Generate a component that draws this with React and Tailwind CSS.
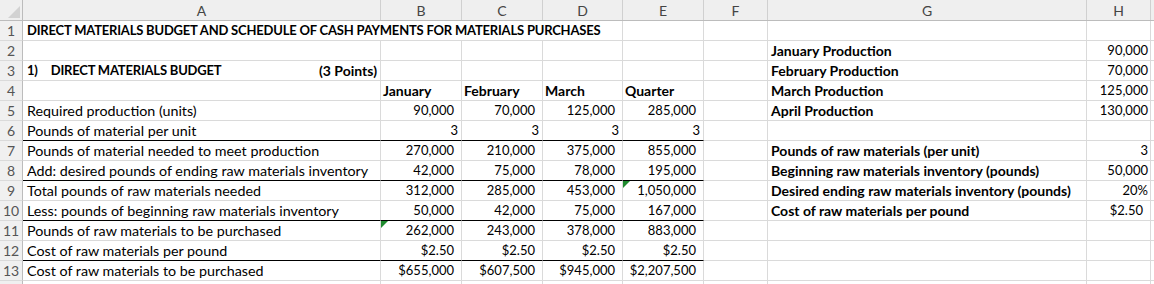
import React from "react";

const colWidths = ["w-[358px]", "w-[81px]", "w-[81px]", "w-[80px]", "w-[81px]", "w-[64px]", "w-[319px]", "w-[64px]"];
const letters = ["A", "B", "C", "D", "E", "F", "G", "H"];

const side = {
  2: ["January Production", "90,000"],
  3: ["February Production", "70,000"],
  4: ["March Production", "125,000"],
  5: ["April Production", "130,000"],
  7: ["Pounds of raw materials (per unit)", "3"],
  8: ["Beginning raw materials inventory (pounds)", "50,000"],
  9: ["Desired ending raw materials inventory (pounds)", "20%"],
  10: ["Cost of raw materials per pound", "$2.50", true],
};

const budget = {
  5: ["Required production (units)", ["90,000", "70,000", "125,000", "285,000"]],
  6: ["Pounds of material per unit", ["3", "3", "3", "3"], { general: true, line: true }],
  7: ["Pounds of material needed to meet production", ["270,000", "210,000", "375,000", "855,000"]],
  8: ["Add: desired pounds of ending raw materials inventory", ["42,000", "75,000", "78,000", "195,000"], { line: true }],
  9: ["Total pounds of raw materials needed", ["312,000", "285,000", "453,000", "1,050,000"], { tri: 3 }],
  10: ["Less: pounds of beginning raw materials inventory", ["50,000", "42,000", "75,000", "167,000"], { line: true }],
  11: ["Pounds of raw materials to be purchased", ["262,000", "243,000", "378,000", "883,000"], { tri: 0 }],
  12: ["Cost of raw materials per pound", ["$2.50", "$2.50", "$2.50", "$2.50"], { line: true }],
  13: ["Cost of raw materials to be purchased", ["$655,000", "$607,500", "$945,000", "$2,207,500"]],
};

function Triangle() {
  return (
    <svg className="absolute left-0 top-0" width="7" height="7" viewBox="0 0 7 7">
      <polygon points="0,0 7,0 0,7" fill="#1e8a2e" />
    </svg>
  );
}

// text kinds: txt = regular label, num = numbers, bold = bold label, caps = bold uppercase
const kinds = {
  txt: "text-[14.3px]",
  num: "text-[13px]",
  bold: "text-[14px] font-bold",
  caps: "text-[13px] font-bold tracking-[-0.2px]",
};

function Cell({ w, line, align, kind = "txt", pad, tri, children }) {
  return (
    <div
      className={`relative shrink-0 h-[20px] flex items-end whitespace-nowrap border-r border-b border-r-[#dadada] ${
        line ? "border-b-black" : "border-b-[#dadada]"
      } ${w} ${align === "r" ? "justify-end" : "justify-start"} ${kinds[kind]} ${pad || ""}`}
    >
      {tri && <Triangle />}
      <span className="leading-[19px]">{children}</span>
    </div>
  );
}

function RowNum({ n }) {
  return (
    <div className="shrink-0 w-[23px] h-[20px] flex items-end justify-center bg-[#f0f0f0] border-r border-r-[#bcbcbc] border-b border-b-[#dadada] text-[#555] text-[14px]">
      <span className="leading-[19px]">{n}</span>
    </div>
  );
}

function Row({ n }) {
  const cells = [];
  if (n === 1) {
    cells.push(
      <Cell key="a" w="w-[600px]" kind="caps" pad="pl-[4px]">
        DIRECT MATERIALS BUDGET AND SCHEDULE OF CASH PAYMENTS FOR MATERIALS PURCHASES
      </Cell>
    );
    cells.push(<Cell key="e" w={colWidths[4]} />);
  } else if (n === 3) {
    cells.push(
      <div key="a" className="shrink-0 w-[358px] h-[20px] flex items-end justify-between pl-[4px] pr-[3px] font-bold border-r border-b border-[#dadada] whitespace-nowrap">
        <span className="leading-[19px] text-[13px] tracking-[-0.2px]">
          1)<span className="inline-block w-[13px]" />DIRECT MATERIALS BUDGET
        </span>
        <span className="leading-[19px] text-[14px]">(3 Points)</span>
      </div>
    );
    for (let i = 1; i < 5; i++) cells.push(<Cell key={i} w={colWidths[i]} />);
  } else if (n === 4) {
    cells.push(<Cell key="a" w={colWidths[0]} />);
    ["January", "February", "March", "Quarter"].forEach((t, i) =>
      cells.push(
        <Cell key={t} w={colWidths[i + 1]} kind="bold" pad="pl-[2px]">
          {t}
        </Cell>
      )
    );
  } else if (budget[n]) {
    const [label, vals, opt = {}] = budget[n];
    cells.push(
      <Cell key="a" w={colWidths[0]} line={opt.line} pad="pl-[4px]">
        {label}
      </Cell>
    );
    vals.forEach((v, i) =>
      cells.push(
        <Cell
          key={i}
          w={colWidths[i + 1]}
          line={opt.line}
          align="r"
          kind="num"
          tri={opt.tri === i}
          pad={opt.general ? "pr-[3px]" : "pr-[7px]"}
        >
          {v}
        </Cell>
      )
    );
  } else {
    for (let i = 0; i < 5; i++) cells.push(<Cell key={i} w={colWidths[i]} />);
  }

  cells.push(<Cell key="f" w={colWidths[5]} />);
  const s = side[n];
  cells.push(
    <Cell key="g" w={colWidths[6]} kind="bold" pad="pl-[3px]">
      {s ? s[0] : ""}
    </Cell>
  );
  cells.push(
    <Cell key="h" w={colWidths[7]} align="r" kind="num" pad={s && s[2] ? "pr-[7px]" : "pr-[2px]"}>
      {s ? s[1] : ""}
    </Cell>
  );

  return (
    <div className="flex">
      <RowNum n={n} />
      {cells}
      <div className="flex-1 h-[20px] border-b border-b-[#dadada]" />
    </div>
  );
}

export default function App() {
  const rows = [1, 2, 3, 4, 5, 6, 7, 8, 9, 10, 11, 12, 13];
  return (
    <div className="w-[1154px] h-[284px] overflow-hidden bg-white text-black" style={{ fontFamily: "Lato, 'Liberation Sans', sans-serif" }}>
      <div className="flex h-[21px] bg-[#efefef] border-b border-b-[#bcbcbc] text-[#444] text-[14px]">
        <div className="relative shrink-0 w-[23px] h-full border-r border-r-[#bcbcbc]">
          <svg className="absolute right-[2px] bottom-[2px]" width="12" height="12" viewBox="0 0 12 12">
            <polygon points="12,0 12,12 0,12" fill="#d2d2d2" />
          </svg>
        </div>
        {letters.map((l, i) => (
          <div key={l} className={`shrink-0 ${colWidths[i]} h-full flex items-center justify-center border-r border-r-[#d0d0d0]`}>
            {l}
          </div>
        ))}
        <div className="flex-1" />
      </div>
      {rows.map((n) => (
        <Row key={n} n={n} />
      ))}
      <div className="flex h-[20px]">
        <div className="shrink-0 w-[23px] h-full bg-[#f0f0f0] border-r border-r-[#bcbcbc]" />
        {colWidths.map((w, i) => (
          <div key={i} className={`shrink-0 ${w} h-full border-r border-r-[#dadada]`} />
        ))}
      </div>
    </div>
  );
}
